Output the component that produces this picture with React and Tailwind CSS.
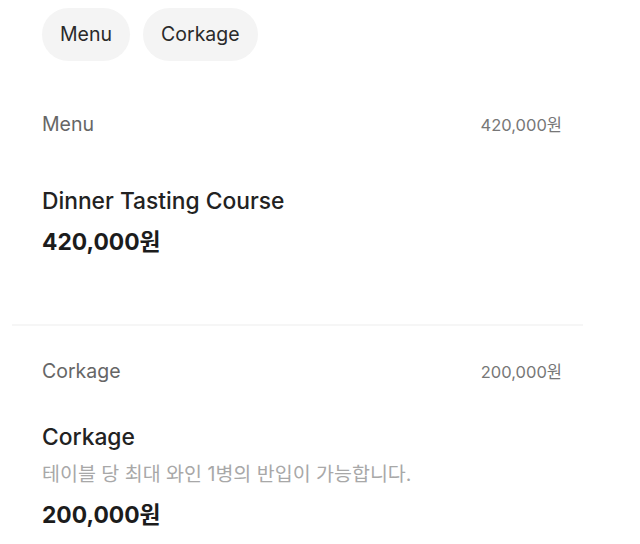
const font = { fontFamily: 'Inter, "Noto Sans CJK KR", sans-serif' };

const items = [
  { category: "Menu", total: "420,000원", name: "Dinner Tasting Course", desc: null, price: "420,000원" },
  { category: "Corkage", total: "200,000원", name: "Corkage", desc: "테이블 당 최대 와인 1병의 반입이 가능합니다.", price: "200,000원" },
];

function Section({ item, first }) {
  return (
    <div className={first ? "pl-[30px] pr-[21px] pt-[8px] pb-[66px]" : "pl-[30px] pr-[21px] pt-[30px]"}>
      <div className="flex items-center justify-between h-[32px]">
        <span className="text-[19.5px] text-[#666]">{item.category}</span>
        <span className="text-[16.5px] text-[#777]">{item.total}</span>
      </div>
      <div className={first ? "mt-[44px]" : "mt-[33px]"}>
        <p className="text-[22.8px] leading-[32px] font-medium text-[#222]">{item.name}</p>
        {item.desc && <p className="mt-[8px] text-[19.5px] leading-[26px] text-[#a8a8a8]">{item.desc}</p>}
        <p className={(item.desc ? "mt-[12px]" : "mt-[9px]") + " text-[22.8px] leading-[32px] font-bold text-[#1c1c1c]"}>{item.price}</p>
      </div>
    </div>
  );
}

export default function App() {
  return (
    <div className="w-[640px] h-[544px] bg-white overflow-hidden" style={font}>
      <div className="flex gap-[13px] pl-[42px] pt-[8px]">
        {items.map((it) => (
          <div key={it.category} className="h-[53px] px-[18px] rounded-full bg-[#f4f4f4] flex items-center text-[19.5px] text-[#2a2a2a]">
            {it.category}
          </div>
        ))}
      </div>
      <div className="ml-[12px] w-[571px] mt-[40px]">
        <Section item={items[0]} first />
        <div className="h-[2px] bg-[#f6f6f6]" />
        <Section item={items[1]} />
      </div>
    </div>
  );
}
